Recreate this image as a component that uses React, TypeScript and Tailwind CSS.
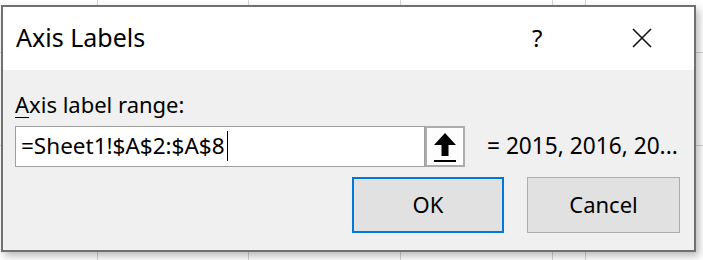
import React from "react";

const font = { fontFamily: '"Noto Sans", "Open Sans", sans-serif' };

export default function App() {
  return (
    <div className="relative w-[703px] h-[260px] overflow-hidden bg-white" style={font}>
      {/* spreadsheet grid behind */}
      <div className="absolute left-[97px] top-0 h-full w-px bg-[#d4d4d4]" />
      <div className="absolute left-[248px] top-0 h-full w-px bg-[#d4d4d4]" />
      <div className="absolute left-[400px] top-0 h-full w-px bg-[#d4d4d4]" />
      <div className="absolute left-[552px] top-0 h-full w-px bg-[#d4d4d4]" />
      <div className="absolute left-[585px] top-0 h-full w-px bg-[#d4d4d4]" />
      <div className="absolute left-0 top-[52px] w-full h-px bg-[#d4d4d4]" />
      <div className="absolute left-0 top-[145px] w-full h-px bg-[#d4d4d4]" />
      <div className="absolute left-[604px] top-[-22px] text-[22px] leading-none text-[#222]">12</div>

      {/* dialog window */}
      <div className="absolute left-[1px] top-[5px] w-[695px] h-[247px] border-2 border-[#707070] bg-[#f0f0f0] flex flex-col shadow-[3px_4px_8px_rgba(0,0,0,0.28)]">
        <div className="h-[63px] bg-white flex items-center pl-[13px] pr-[42px] text-black">
          <div className="text-[25px] leading-none flex-1 pb-[2px]">Axis Labels</div>
          <div className="text-[24px] leading-none w-[14px] mr-[86px] pb-[2px]">?</div>
          <svg width="20" height="20" viewBox="0 0 20 20" className="mb-[1px]">
            <path d="M1 1 L19 19 M19 1 L1 19" stroke="#111" strokeWidth="1.6" fill="none" />
          </svg>
        </div>
        <div className="flex-1 flex flex-col pl-[12px] pr-[14px] pt-[23px]">
          <div className="text-[22px] leading-none text-black h-[33px]">
            <span className="underline underline-offset-[4px] decoration-1">A</span>xis label range:
          </div>
          <div className="flex items-center h-[41px]">
            <div className="w-[410px] h-[41px] border border-[#a0a0a0] bg-white flex items-center pl-[5px] pb-[1px]">
              <span className="text-[22.5px] leading-none text-black">=Sheet1!$A$2:$A$8</span>
              <span className="w-px h-[30px] bg-black ml-[2px]" />
            </div>
            <div className="w-[40px] h-[41px] border-2 border-[#acacac] bg-[#fdfdfd] flex items-center justify-center">
              <svg width="24" height="32" viewBox="0 0 24 32">
                <polygon points="12,2 23,14 15.5,14 15.5,25 8.5,25 8.5,14 1,14" fill="#000" />
                <rect x="1" y="29" width="22" height="2" fill="#000" />
              </svg>
            </div>
            <div className="ml-[22px] text-[22.7px] leading-none text-black pb-[1px]">= 2015, 2016, 20...</div>
          </div>
          <div className="flex mt-[10px] h-[56px]">
            <div className="ml-[337px] w-[152px] h-[56px] border-2 border-[#0078d7] bg-[#e1e1e1] flex items-center justify-center text-[22px] leading-none text-black pb-[2px]">
              OK
            </div>
            <div className="ml-[23px] w-[153px] h-[56px] border border-[#adadad] bg-[#e1e1e1] flex items-center justify-center text-[22px] leading-none text-black pb-[2px]">
              Cancel
            </div>
          </div>
        </div>
      </div>
    </div>
  );
}
